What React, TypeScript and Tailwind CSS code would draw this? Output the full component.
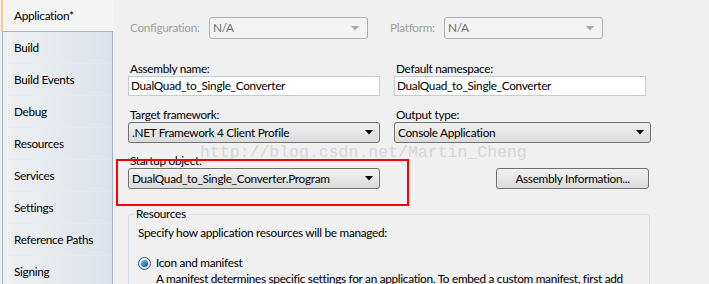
import React from "react";

const font = { fontFamily: 'Lato, "Noto Sans", sans-serif' };

function Arrow({ gray }: { gray?: boolean }) {
  return (
    <svg width="8" height="5" viewBox="0 0 8 5" className="shrink-0">
      <path d="M0 0 H8 L4 4.5 Z" fill={gray ? "#a8a8a8" : "#000"} />
    </svg>
  );
}

function DisabledSelect({ w }: { w: string }) {
  return (
    <div
      className={`${w} h-[22px] rounded-[3px] border border-[#adb2b5] bg-[#f4f4f4] flex items-center pl-[3px] pr-[8px] justify-between text-[#6d6d6d]`}
    >
      <span>N/A</span>
      <Arrow gray />
    </div>
  );
}

function Select({ w, value }: { w: string; value: string }) {
  return (
    <div
      className={`${w} h-[21px] rounded-[3px] border border-[#707070] bg-gradient-to-b from-[#f2f2f2] to-[#dbdbdb] flex items-center pl-[3px] pr-[6px] justify-between text-black`}
    >
      <span>{value}</span>
      <Arrow />
    </div>
  );
}

function TextBox({ w, value }: { w: string; value: string }) {
  return (
    <div
      className={`${w} h-[20px] border border-[#c5cbd2] bg-white flex items-center pl-[2px] text-black`}
    >
      {value}
    </div>
  );
}

const tabs = [
  "Build",
  "Build Events",
  "Debug",
  "Resources",
  "Services",
  "Settings",
  "Reference Paths",
  "Signing",
];

export default function App() {
  return (
    <div
      className="relative w-[709px] h-[284px] overflow-hidden bg-[#f0f0f0] flex text-[11.8px] tracking-[-0.3px] leading-[16px] text-[#1e1e1e]"
      style={font}
    >
      {/* Sidebar */}
      <div className="w-[113px] shrink-0 flex flex-col">
        <div className="h-[31px] shrink-0 ml-[1px] border-l-2 border-[#f3cf8e] bg-[#f4f4f4] flex items-center pl-[11px] text-black">
          Application*
        </div>
        <div className="flex-1 ml-[2px] border-l border-r border-t border-[#a6b3c4] bg-gradient-to-r from-[#eef0f3] to-[#dde2ea] flex flex-col">
          {tabs.map((t, i) => (
            <div key={t} className="h-[32px] shrink-0 flex flex-col">
              <div className="flex-1 flex items-center pl-[11px] text-black">{t}</div>
              {i < tabs.length - 1 && (
                <div className="h-px mx-[5px] bg-[#e6e9ee]" />
              )}
            </div>
          ))}
        </div>
      </div>

      {/* Content */}
      <div className="flex-1 flex flex-col pl-[15px]">
        <div className="flex items-center mt-[17px] h-[22px]">
          <span className="ml-[2px] w-[79px] text-[#a0a0a0]">Configuration:</span>
          <DisabledSelect w="w-[159px]" />
          <span className="ml-[22px] w-[54px] text-[#a0a0a0]">Platform:</span>
          <DisabledSelect w="w-[159px]" />
        </div>
        <div className="mt-[14px] h-px bg-[#a0a0a0]" />

        <div className="flex mt-[8px] gap-[14px]">
          <div className="flex flex-col">
            <span className="ml-[2px] h-[15px] text-black">Assembly name:</span>
            <TextBox w="w-[252px]" value="DualQuad_to_Single_Converter" />
          </div>
          <div className="flex flex-col">
            <span className="ml-[2px] h-[15px] text-black">Default namespace:</span>
            <TextBox w="w-[252px]" value="DualQuad_to_Single_Converter" />
          </div>
        </div>

        <div className="flex mt-[11px] gap-[14px]">
          <div className="flex flex-col">
            <span className="ml-[2px] h-[15px] text-black">Target framework:</span>
            <Select w="w-[252px]" value=".NET Framework 4 Client Profile" />
          </div>
          <div className="flex flex-col">
            <span className="ml-[2px] h-[15px] text-black">Output type:</span>
            <Select w="w-[257px]" value="Console Application" />
          </div>
        </div>

        <div className="flex mt-[10px] items-end">
          <div className="flex flex-col">
            <span className="ml-[2px] h-[15px] text-black">Startup object:</span>
            <Select w="w-[252px]" value="DualQuad_to_Single_Converter.Program" />
          </div>
          <div className="ml-[116px] w-[153px] h-[21px] rounded-[3px] border border-[#707070] bg-gradient-to-b from-[#f2f2f2] to-[#dbdbdb] flex items-center justify-center text-black">
            Assembly Information...
          </div>
        </div>

        {/* Resources group */}
        <div className="relative mt-[25px] w-[522px] h-[80px] border border-[#d5dfe5] rounded-[3px] pl-[9px] pt-[10px]">
          <span className="absolute -top-[9px] left-[5px] px-[2px] bg-[#f0f0f0] text-black">
            Resources
          </span>
          <div className="text-black">Specify how application resources will be managed:</div>
          <div className="flex items-center mt-[14px] gap-[5px]">
            <div className="w-[13px] h-[13px] rounded-full border border-[#2c628b] bg-gradient-to-b from-[#f4f4f4] to-[#d6d6d6] flex items-center justify-center">
              <div className="w-[7px] h-[7px] rounded-full bg-gradient-to-br from-[#6fc3ef] to-[#0d4b8c]" />
            </div>
            <span className="text-black">Icon and manifest</span>
          </div>
          <div className="ml-[18px] text-black whitespace-nowrap">
            A manifest determines specific settings for an application. To embed a custom manifest, first add
          </div>
        </div>
      </div>

      {/* Watermark */}
      <div
        className="absolute left-[200px] top-[144px] text-[16.5px] tracking-normal leading-[18px] text-[#d6d6d6] pointer-events-none whitespace-nowrap"
        style={{ fontFamily: '"Liberation Mono", monospace' }}
      >
        http://blog.csdn.net/Martin_Cheng
      </div>

      {/* Red annotation box */}
      <div className="absolute left-[116px] top-[159px] w-[293px] h-[47px] border-2 border-[#ff0000] pointer-events-none" />
    </div>
  );
}
